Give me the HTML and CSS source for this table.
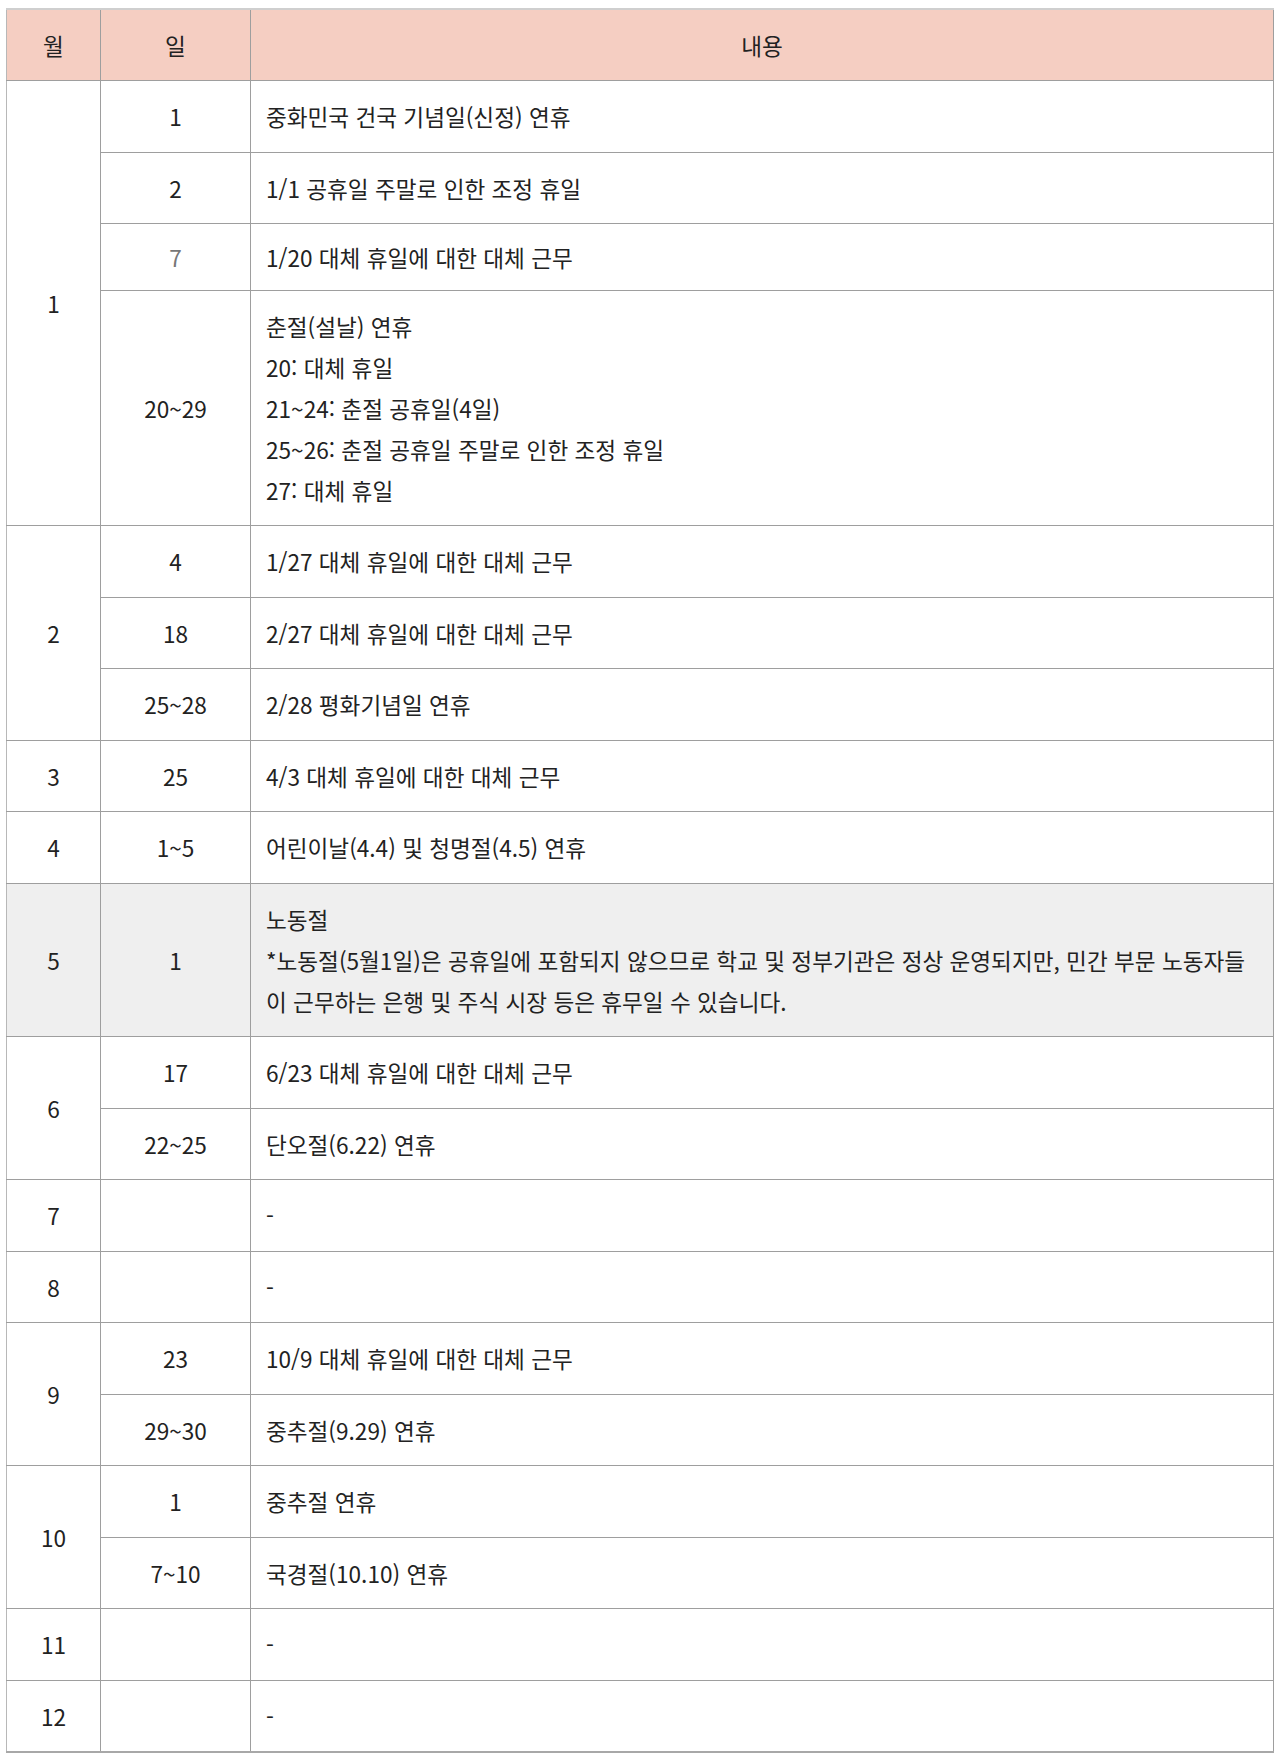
FILE: index.html
```html
<!DOCTYPE html>
<html lang="ko">
<head>
<meta charset="utf-8">
<title>공휴일</title>
<link rel="stylesheet" href="styles.css">
</head>
<body>
<table class="holidays">
  <colgroup>
    <col class="c-month">
    <col class="c-day">
    <col class="c-desc">
  </colgroup>
  <thead>
    <tr><th>월</th><th>일</th><th>내용</th></tr>
  </thead>
  <tbody>
    <tr><td class="center" rowspan="4">1</td><td class="center">1</td><td>중화민국 건국 기념일(신정) 연휴</td></tr>
    <tr><td class="center">2</td><td>1/1 공휴일 주말로 인한 조정 휴일</td></tr>
    <tr class="short"><td class="center muted">7</td><td>1/20 대체 휴일에 대한 대체 근무</td></tr>
    <tr><td class="center">20~29</td><td>춘절(설날) 연휴<br>20: 대체 휴일<br>21~24: 춘절 공휴일(4일)<br>25~26: 춘절 공휴일 주말로 인한 조정 휴일<br>27: 대체 휴일</td></tr>

    <tr><td class="center" rowspan="3">2</td><td class="center">4</td><td>1/27 대체 휴일에 대한 대체 근무</td></tr>
    <tr><td class="center">18</td><td>2/27 대체 휴일에 대한 대체 근무</td></tr>
    <tr><td class="center">25~28</td><td>2/28 평화기념일 연휴</td></tr>

    <tr><td class="center">3</td><td class="center">25</td><td>4/3 대체 휴일에 대한 대체 근무</td></tr>
    <tr><td class="center">4</td><td class="center">1~5</td><td>어린이날(4.4) 및 청명절(4.5) 연휴</td></tr>
    <tr class="grey"><td class="center">5</td><td class="center">1</td><td>노동절<br>*노동절(5월1일)은 공휴일에 포함되지 않으므로 학교 및 정부기관은 정상 운영되지만, 민간 부문 노동자들이 근무하는 은행 및 주식 시장 등은 휴무일 수 있습니다.</td></tr>

    <tr><td class="center" rowspan="2">6</td><td class="center">17</td><td>6/23 대체 휴일에 대한 대체 근무</td></tr>
    <tr><td class="center">22~25</td><td>단오절(6.22) 연휴</td></tr>

    <tr><td class="center">7</td><td class="center"></td><td>-</td></tr>
    <tr><td class="center">8</td><td class="center"></td><td>-</td></tr>

    <tr><td class="center" rowspan="2">9</td><td class="center">23</td><td>10/9 대체 휴일에 대한 대체 근무</td></tr>
    <tr><td class="center">29~30</td><td>중추절(9.29) 연휴</td></tr>

    <tr><td class="center" rowspan="2">10</td><td class="center">1</td><td>중추절 연휴</td></tr>
    <tr><td class="center">7~10</td><td>국경절(10.10) 연휴</td></tr>

    <tr><td class="center">11</td><td class="center"></td><td>-</td></tr>
    <tr><td class="center">12</td><td class="center"></td><td>-</td></tr>
  </tbody>
</table>
</body>
</html>
```
FILE: styles.css
```css
html, body {
  margin: 0;
  padding: 0;
  background: #ffffff;
}

body {
  padding: 8px 6px 0 6px;
  font-family: "Noto Sans CJK KR", "Noto Sans", sans-serif;
  font-size: 22.6px;
  color: #222222;
}

.holidays {
  width: 1268px;
  border-collapse: collapse;
  table-layout: fixed;
  border-top: 2px solid #cfcfcf;
  border-bottom: 2px solid #a8a8a8;
}

.c-month { width: 94px; }
.c-day { width: 150px; }
.c-desc { width: auto; }

.holidays th,
.holidays td {
  border: 1px solid #9e9e9e;
  line-height: 41px;
  vertical-align: middle;
}

.holidays th {
  background: #f5cec2;
  font-weight: normal;
  height: 70px;
  padding: 0;
  text-align: center;
}

.holidays td {
  padding: 15px 15px 14.5px 15px;
  text-align: left;
  word-break: break-all;
}

.holidays td.center {
  text-align: center;
  padding-left: 4px;
  padding-right: 4px;
}

.holidays tr.short td {
  padding-top: 12.5px;
  padding-bottom: 12px;
}

.holidays td.muted {
  color: #777777;
}

.holidays tr.grey td {
  background: #efefef;
}

.holidays tr > :first-child {
  border-left-color: #b8b8b8;
}
```
